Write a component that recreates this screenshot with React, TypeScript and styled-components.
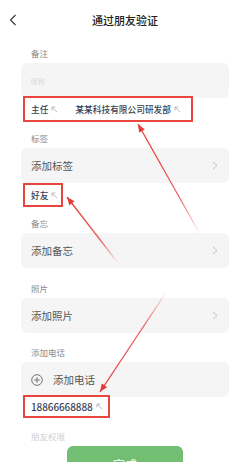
import React from "react";
import styled, { createGlobalStyle } from "styled-components";

const Global = createGlobalStyle`
  html, body { margin: 0; padding: 0; background: #fff; }
  body { width: 250px; height: 462px; overflow: hidden; font-family: "Noto Sans CJK SC", "Noto Sans", sans-serif; }
`;

const Page = styled.div`
  position: relative;
  width: 250px;
  height: 462px;
  overflow: hidden;
  background: #fff;
`;

const Header = styled.div`
  height: 40px;
  display: flex;
  align-items: center;
  justify-content: center;
  position: relative;
`;

const Back = styled.div`
  position: absolute;
  left: 9px;
  top: 14px;
  width: 8px;
  height: 12px;
  display: flex;
`;

const Title = styled.div`
  font-size: 11px;
  font-weight: 500;
  color: #222;
  line-height: 16px;
`;

const Label = styled.div<{ $mt: number; $faded?: boolean }>`
  margin-top: ${(p) => p.$mt}px;
  margin-bottom: 2px;
  padding-left: 31px;
  font-size: 8.5px;
  line-height: 16px;
  height: 16px;
  color: ${(p) => (p.$faded ? "#cfcfcf" : "#8a8a8a")};
`;

const Field = styled.div`
  margin: 0 21px;
  height: 35px;
  border-radius: 6px;
  background: #f5f5f5;
  display: flex;
  align-items: center;
  justify-content: space-between;
  padding: 0 11px 0 10px;
  box-sizing: border-box;
`;

const FieldText = styled.span`
  font-size: 10.5px;
  color: #555;
  display: flex;
  align-items: center;
  gap: 10px;
`;

const Placeholder = styled.span`
  font-size: 7px;
  color: #d6d6d6;
  filter: blur(0.4px);
`;

const Tag = styled.div<{ $w: number; $h: number }>`
  position: relative;
  z-index: 1;
  margin-left: 23px;
  width: ${(p) => p.$w}px;
  height: ${(p) => p.$h}px;
  box-sizing: border-box;
  border: 2px solid #e8453c;
  display: flex;
  align-items: center;
  padding-left: 6px;
`;

const TagText = styled.span<{ $size?: number; $gap?: number }>`
  font-size: ${(p) => p.$size ?? 8.7}px;
  font-weight: 500;
  color: #3b3f52;
  display: inline-flex;
  align-items: center;
  gap: 3px;
  margin-right: ${(p) => p.$gap ?? 0}px;
  letter-spacing: ${(p) => (p.$size ? "-0.1px" : "0")};
`;

const Overlap = styled.div`
  margin-top: -2px;
`;

const Done = styled.div`
  margin: 1px 0 0 67px;
  width: 116px;
  height: 36px;
  border-radius: 6px;
  background: #72bf74;
  color: #fff;
  font-size: 12px;
  display: flex;
  align-items: center;
  justify-content: center;
`;

const Arrows = styled.svg`
  position: absolute;
  left: 0;
  top: 0;
  pointer-events: none;
  z-index: 2;
`;

const Corner = () => (
  <svg width="7" height="7" viewBox="0 0 7 7">
    <path d="M1 1 L6 6 M1 1 L1 4.5 M1 1 L4.5 1" stroke="#b3b3b3" strokeWidth="0.9" fill="none" />
  </svg>
);

const Chevron = () => (
  <svg width="6" height="9" viewBox="0 0 6 9">
    <path d="M1 1 L5 4.5 L1 8" stroke="#bdbdbd" strokeWidth="0.9" fill="none" />
  </svg>
);

const PlusCircle = () => (
  <svg width="12" height="12" viewBox="0 0 12 12">
    <circle cx="6" cy="6" r="5.3" stroke="#666" strokeWidth="0.9" fill="none" />
    <path d="M6 3.2 V8.8 M3.2 6 H8.8" stroke="#666" strokeWidth="0.9" />
  </svg>
);

type Arrow = { x1: number; y1: number; x2: number; y2: number; id: string };

const arrows: Arrow[] = [
  { id: "a1", x1: 200, y1: 234, x2: 138, y2: 124 },
  { id: "a2", x1: 118, y1: 263, x2: 67, y2: 197 },
  { id: "a3", x1: 167, y1: 291, x2: 100, y2: 392 },
];

function head(a: Arrow) {
  const dx = a.x2 - a.x1;
  const dy = a.y2 - a.y1;
  const len = Math.hypot(dx, dy);
  const ux = dx / len;
  const uy = dy / len;
  const L = 8;
  const W = 3.2;
  const bx = a.x2 - ux * L;
  const by = a.y2 - uy * L;
  return `${a.x2},${a.y2} ${bx - uy * W},${by + ux * W} ${bx + uy * W},${by - ux * W}`;
}

export default function App() {
  return (
    <Page>
      <Global />
      <Header>
        <Back>
          <svg width="8" height="12" viewBox="0 0 8 12">
            <path d="M6.5 1 L1.5 6 L6.5 11" stroke="#333" strokeWidth="1.1" fill="none" />
          </svg>
        </Back>
        <Title>通过朋友验证</Title>
      </Header>

      <Label $mt={5}>备注</Label>
      <Field>
        <Placeholder>昵称</Placeholder>
      </Field>
      <Overlap>
        <Tag $w={170} $h={26}>
          <TagText $gap={17}>
            主任
            <Corner />
          </TagText>
          <TagText>
            某某科技有限公司研发部
            <Corner />
          </TagText>
        </Tag>
      </Overlap>

      <Label $mt={8}>标签</Label>
      <Field>
        <FieldText>添加标签</FieldText>
        <Chevron />
      </Field>
      <Tag $w={40} $h={24}>
        <TagText>
          好友
          <Corner />
        </TagText>
      </Tag>

      <Label $mt={8}>备忘</Label>
      <Field>
        <FieldText>添加备忘</FieldText>
        <Chevron />
      </Field>

      <Label $mt={12}>照片</Label>
      <Field>
        <FieldText>添加照片</FieldText>
        <Chevron />
      </Field>

      <Label $mt={11}>添加电话</Label>
      <Field>
        <FieldText>
          <PlusCircle />
          添加电话
        </FieldText>
      </Field>
      <Overlap>
        <Tag $w={87} $h={23}>
          <TagText $size={10}>
            18866668888
            <Corner />
          </TagText>
        </Tag>
      </Overlap>

      <Label $mt={10} $faded>
        朋友权限
      </Label>
      <Done>完成</Done>

      <Arrows width="250" height="462" viewBox="0 0 250 462">
        <defs>
          {arrows.map((a) => (
            <linearGradient
              key={a.id}
              id={a.id}
              gradientUnits="userSpaceOnUse"
              x1={a.x1}
              y1={a.y1}
              x2={a.x2}
              y2={a.y2}
            >
              <stop offset="0" stopColor="#e53935" stopOpacity="0" />
              <stop offset="0.35" stopColor="#e53935" stopOpacity="0.8" />
              <stop offset="1" stopColor="#e53935" stopOpacity="1" />
            </linearGradient>
          ))}
        </defs>
        {arrows.map((a) => (
          <g key={a.id}>
            <line x1={a.x1} y1={a.y1} x2={a.x2} y2={a.y2} stroke={`url(#${a.id})`} strokeWidth="1.3" />
            <polygon points={head(a)} fill="#e53935" />
          </g>
        ))}
      </Arrows>
    </Page>
  );
}
